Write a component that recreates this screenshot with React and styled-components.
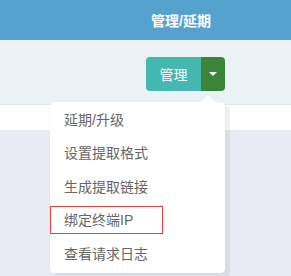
import React from 'react';
import styled, { createGlobalStyle } from 'styled-components';

const GlobalStyle = createGlobalStyle`
  html, body {
    margin: 0;
    padding: 0;
    background: #e8ebf3;
    font-family: "Liberation Sans", "Noto Sans CJK SC", sans-serif;
  }
`;

const Page = styled.div`
  width: 291px;
  height: 276px;
  overflow: hidden;
  background: #e8ebf3;
`;

const Header = styled.div`
  height: 40px;
  background: #55a2ce;
  display: flex;
  align-items: center;
  justify-content: flex-end;
  padding-right: 80px;
  color: #fff;
  font-size: 14px;
  font-weight: bold;
`;

const Row = styled.div`
  height: 65px;
  background: #eaf2f6;
  border-bottom: 1px solid #dfe7ec;
  display: flex;
  align-items: center;
  justify-content: flex-end;
  padding-right: 66px;
  padding-top: 3px;
  box-sizing: border-box;
`;

const BlankRow = styled.div`
  height: 25px;
  background: #fff;
`;

const SplitButton = styled.div`
  position: relative;
  display: flex;
  height: 34px;
  border-radius: 4px;
`;

const MainButton = styled.button`
  width: 55px;
  border: none;
  background: #44b7b0;
  color: #fff;
  font-family: inherit;
  font-size: 14px;
  border-radius: 4px 0 0 4px;
  padding: 0;
`;

const CaretButton = styled.button`
  width: 24px;
  border: none;
  background: #3b8538;
  border-radius: 0 4px 4px 0;
  display: flex;
  align-items: center;
  justify-content: center;
  padding: 0;
`;

const Caret = styled.span`
  width: 0;
  height: 0;
  border-left: 4px solid transparent;
  border-right: 4px solid transparent;
  border-top: 4px solid #fff;
  margin-top: 1px;
`;

const Menu = styled.ul`
  position: absolute;
  top: calc(100% + 11px);
  right: 0;
  width: 175px;
  margin: 0;
  padding: 2px 0;
  list-style: none;
  background: #fff;
  border-radius: 4px;
  box-shadow: 0 0 1px rgba(0, 0, 0, 0.18), 5px 4px 0 rgba(0, 0, 0, 0.06);
  z-index: 5;

  &::before {
    content: '';
    position: absolute;
    top: -7px;
    right: 10px;
    width: 0;
    height: 0;
    border-left: 7px solid transparent;
    border-right: 7px solid transparent;
    border-bottom: 7px solid #fff;
  }
`;

const MenuItem = styled.li`
  position: relative;
  height: 33.5px;
  line-height: 33.5px;
  padding-left: 14px;
  font-size: 14px;
  color: #666;
  white-space: nowrap;
`;

const Highlight = styled.span`
  position: absolute;
  left: 0;
  top: 2px;
  width: 113px;
  height: 28px;
  box-sizing: border-box;
  border: 1px solid #e8403c;
  pointer-events: none;
`;

const items = ['延期/升级', '设置提取格式', '生成提取链接', '绑定终端IP', '查看请求日志'];

export default function App() {
  return (
    <Page>
      <GlobalStyle />
      <Header>管理/延期</Header>
      <Row>
        <SplitButton>
          <MainButton>管理</MainButton>
          <CaretButton>
            <Caret />
          </CaretButton>
          <Menu>
            {items.map((label, i) => (
              <MenuItem key={label}>
                {label}
                {i === 3 && <Highlight />}
              </MenuItem>
            ))}
          </Menu>
        </SplitButton>
      </Row>
      <BlankRow />
    </Page>
  );
}
